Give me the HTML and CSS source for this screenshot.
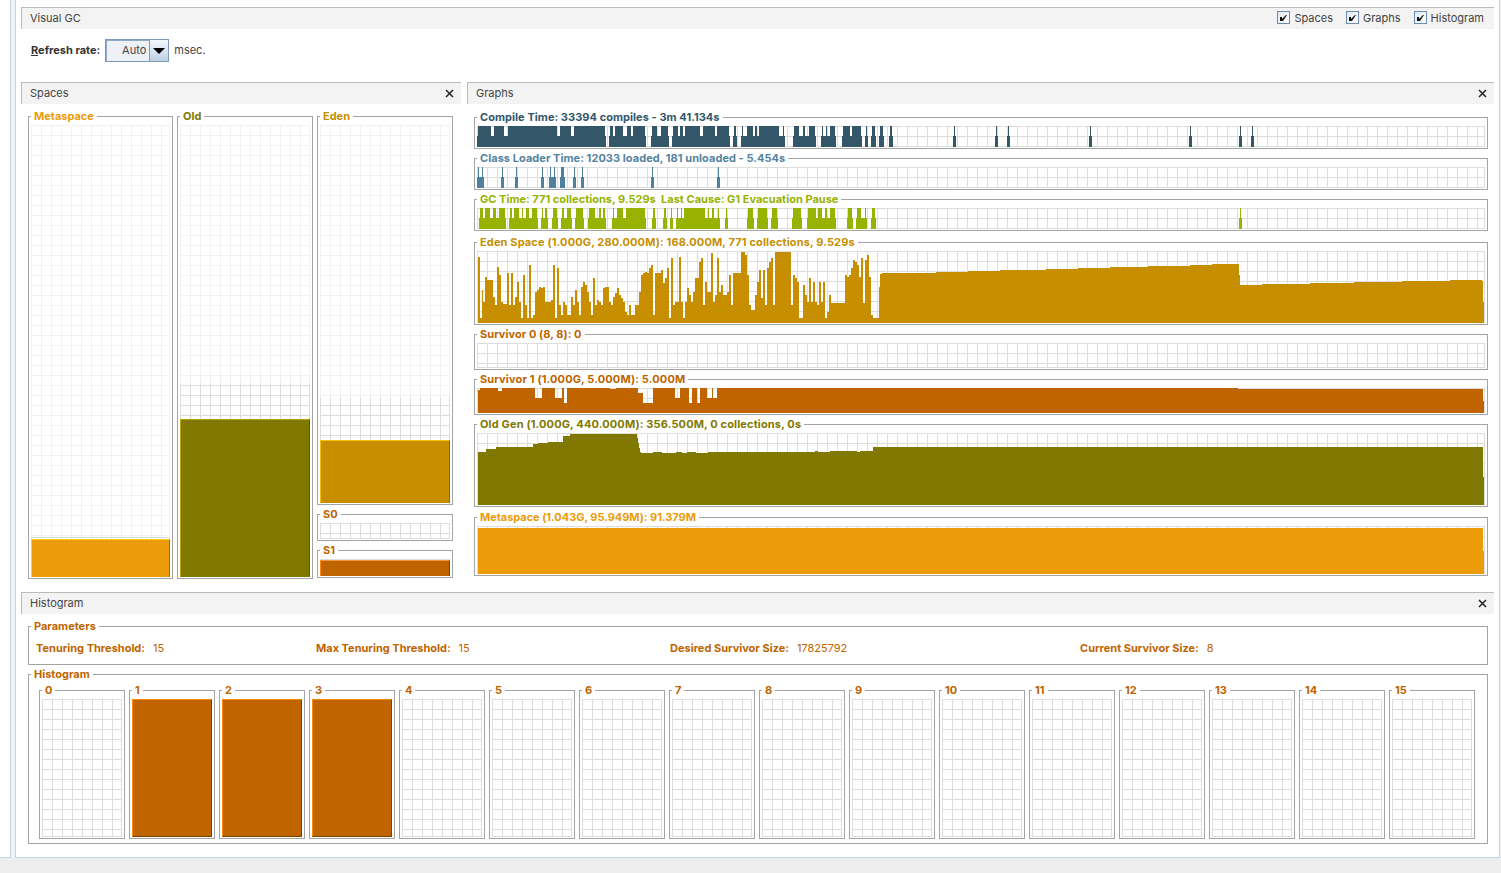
FILE: index.html
```html
<!DOCTYPE html>
<html lang="en">
<head>
<meta charset="utf-8">
<title>Visual GC</title>
<link rel="stylesheet" href="styles.css">
</head>
<body>
<div class="window">
  <div class="side"></div>
  <div class="gutter"></div>
  <main class="main">
    <header class="panel-head">
      <span>Visual GC</span>
      <div class="checks">
        <label class="check"><svg class="checkbox" viewBox="0 0 11 11"><path d="M2 5h2v2l4-4h1L5 9H2z"/></svg>Spaces</label>
        <label class="check"><svg class="checkbox" viewBox="0 0 11 11"><path d="M2 5h2v2l4-4h1L5 9H2z"/></svg>Graphs</label>
        <label class="check"><svg class="checkbox" viewBox="0 0 11 11"><path d="M2 5h2v2l4-4h1L5 9H2z"/></svg>Histogram</label>
      </div>
    </header>
    <div class="refresh">
      <span class="refresh-label"><u>R</u>efresh rate:</span>
      <div class="combo">
        <span class="combo-field">Auto</span>
        <span class="combo-btn"><svg width="12" height="6" viewBox="0 0 12 6"><path d="M0 0h12L6 6z"/></svg></span>
      </div>
      <span>msec.</span>
    </div>

    <div class="panels">
      <section class="panel panel-spaces">
        <header class="panel-head"><span>Spaces</span><svg class="close" viewBox="0 0 9 9"><path d="M1 1l7 7M8 1L1 8"/></svg></header>
        <div class="spaces-body">
          <div class="box space-meta">
            <div class="title c-meta">Metaspace</div>
            <div class="plot grid-light plot-tall">
              <div class="spacer"></div>
              <div class="dark dark-meta"></div>
              <div class="bar bar-meta"></div>
            </div>
          </div>
          <div class="box space-old">
            <div class="title c-old">Old</div>
            <div class="plot grid-light plot-tall">
              <div class="spacer"></div>
              <div class="dark dark-old"></div>
              <div class="bar bar-old"></div>
            </div>
          </div>
          <div class="eden-col">
            <div class="box">
              <div class="title c-eden">Eden</div>
              <div class="plot grid-light plot-eden">
                <div class="spacer"></div>
                <div class="dark dark-eden"></div>
                <div class="bar bar-eden"></div>
              </div>
            </div>
            <div class="box">
              <div class="title c-surv">S0</div>
              <div class="plot grid-dark plot-s0"></div>
            </div>
            <div class="box">
              <div class="title c-surv">S1</div>
              <div class="plot grid-dark plot-s1"><div class="spacer"></div><div class="bar bar-s1"></div></div>
            </div>
          </div>
        </div>
      </section>

      <section class="panel panel-graphs">
        <header class="panel-head"><span>Graphs</span><svg class="close" viewBox="0 0 9 9"><path d="M1 1l7 7M8 1L1 8"/></svg></header>
        <div class="graphs-body">
          <div class="box"><div class="title c-compile ls-slight">Compile Time: 33394 compiles - 3m 41.134s</div><div class="plot grid-dark"><svg class="chart h21" id="chart-compile"></svg></div></div>
          <div class="box"><div class="title c-class ls-slight">Class Loader Time: 12033 loaded, 181 unloaded - 5.454s</div><div class="plot grid-dark"><svg class="chart h21" id="chart-class"></svg></div></div>
          <div class="box"><div class="title c-gc ls-tiny">GC Time: 771 collections, 9.529s&nbsp; Last Cause: G1 Evacuation Pause</div><div class="plot grid-dark"><svg class="chart h21" id="chart-gc"></svg></div></div>
          <div class="box wide-gap"><div class="title c-eden ls-wide">Eden Space (1.000G, 280.000M): 168.000M, 771 collections, 9.529s</div><div class="plot grid-dark"><svg class="chart h72" id="chart-eden"></svg></div></div>
          <div class="box"><div class="title c-surv ls-slight">Survivor 0 (8, 8): 0</div><div class="plot grid-dark"><svg class="chart h25" id="chart-s0"></svg></div></div>
          <div class="box"><div class="title c-surv ls-wide">Survivor 1 (1.000G, 5.000M): 5.000M</div><div class="plot grid-dark"><svg class="chart h25" id="chart-s1"></svg></div></div>
          <div class="box"><div class="title c-old ls-wide">Old Gen (1.000G, 440.000M): 356.500M, 0 collections, 0s</div><div class="plot grid-dark"><svg class="chart h72" id="chart-old"></svg></div></div>
          <div class="box mid-gap"><div class="title c-meta ls-neg">Metaspace (1.043G, 95.949M): 91.379M</div><div class="plot grid-dark"><svg class="chart h48" id="chart-meta"></svg></div></div>
        </div>
      </section>
    </div>

    <section class="panel panel-hist">
      <header class="panel-head"><span>Histogram</span><svg class="close" viewBox="0 0 9 9"><path d="M1 1l7 7M8 1L1 8"/></svg></header>
      <div class="hist-body">
        <div class="box">
          <div class="title c-surv">Parameters</div>
          <div class="params">
            <div><b>Tenuring Threshold:</b><span>15</span></div>
            <div><b>Max Tenuring Threshold:</b><span>15</span></div>
            <div><b>Desired Survivor Size:</b><span>17825792</span></div>
            <div><b>Current Survivor Size:</b><span>8</span></div>
          </div>
        </div>
        <div class="box hist-box">
          <div class="title c-surv">Histogram</div>
          <div class="cells">
            <div class="box"><div class="title c-surv">0</div><div class="plot grid-dark cell-plot"></div></div>
            <div class="box"><div class="title c-surv">1</div><div class="plot grid-dark cell-plot"><div class="bar bar-full"></div></div></div>
            <div class="box"><div class="title c-surv">2</div><div class="plot grid-dark cell-plot"><div class="bar bar-full"></div></div></div>
            <div class="box"><div class="title c-surv">3</div><div class="plot grid-dark cell-plot"><div class="bar bar-full"></div></div></div>
            <div class="box"><div class="title c-surv">4</div><div class="plot grid-dark cell-plot"></div></div>
            <div class="box"><div class="title c-surv">5</div><div class="plot grid-dark cell-plot"></div></div>
            <div class="box"><div class="title c-surv">6</div><div class="plot grid-dark cell-plot"></div></div>
            <div class="box"><div class="title c-surv">7</div><div class="plot grid-dark cell-plot"></div></div>
            <div class="box"><div class="title c-surv">8</div><div class="plot grid-dark cell-plot"></div></div>
            <div class="box"><div class="title c-surv">9</div><div class="plot grid-dark cell-plot"></div></div>
            <div class="box"><div class="title c-surv">10</div><div class="plot grid-dark cell-plot"></div></div>
            <div class="box"><div class="title c-surv">11</div><div class="plot grid-dark cell-plot"></div></div>
            <div class="box"><div class="title c-surv">12</div><div class="plot grid-dark cell-plot"></div></div>
            <div class="box"><div class="title c-surv">13</div><div class="plot grid-dark cell-plot"></div></div>
            <div class="box"><div class="title c-surv">14</div><div class="plot grid-dark cell-plot"></div></div>
            <div class="box"><div class="title c-surv">15</div><div class="plot grid-dark cell-plot"></div></div>
          </div>
        </div>
      </div>
    </section>
  </main>
</div>
<script src="charts.js"></script>
</body>
</html>
```
FILE: styles.css
```css
* { box-sizing: border-box; }
html, body { margin: 0; height: 100%; }
body {
  background: #eee;
  color: #444;
  font: 11px/14px Inter, "Liberation Sans", sans-serif;
  overflow: hidden;
}
.window { display: flex; height: 858px; }
.side { width: 11px; background: #fff; border-right: 1px solid #c6d6e8; border-bottom: 1px solid #c6d6e8; }
.gutter { width: 4px; background: #f2f3f5; }
.main {
  width: 1485px;
  background: #fff;
  border: solid #c6d6e8;
  border-width: 0 1px 1px 1px;
  padding: 7px 5px 0;
}
.panel-head {
  display: flex;
  align-items: center;
  justify-content: space-between;
  height: 22px;
  padding: 0 7px 2px 8px;
  background: #f3f3f3;
  border-top: 1px solid #bbb;
  border-left: 1px solid #bbb;
}
.close { width: 9px; height: 9px; fill: none; stroke: #222; stroke-width: 1.5; margin-top: 2px; }
.checks { display: flex; gap: 13px; margin-right: 3px; }
.check { display: flex; align-items: center; gap: 4px; }
.checkbox {
  width: 13px;
  height: 13px;
  border: 1px solid #6c8cae;
  background: linear-gradient(135deg, #dfe8f2, #ffffff);
}
.checkbox path { fill: #111; }
.refresh { display: flex; align-items: flex-start; gap: 5px; height: 53px; padding: 10px 0 0 10px; line-height: 23px; }
.refresh-label { font-weight: 700; color: #333; }
.combo { display: flex; width: 64px; height: 23px; }
.combo-field {
  flex: 1;
  text-align: right;
  padding-right: 3px;
  line-height: 21px;
  background: #eef1f5;
  border: 1px solid #7f9ab8;
  border-right: 0;
  box-shadow: inset 1px 1px 0 #8fa8c4;
}
.combo-btn {
  display: flex;
  align-items: center;
  justify-content: center;
  width: 20px;
  border: 1px solid #7f9ab8;
  background: linear-gradient(#f6f9fc, #bcd0e6);
}
.panels { display: flex; gap: 6px; height: 510px; }
.panel-spaces { width: 440px; }
.panel-graphs { flex: 1; }
.box {
  border: 1px solid #a4a4a4;
  padding: 0 2px 1px;
  background: #fff;
}
.title {
  width: fit-content;
  height: 16px;
  margin-top: -8px;
  padding: 0 3px;
  line-height: 14px;
  font-weight: 700;
  background: #fff;
  white-space: nowrap;
}
.ls-wide { letter-spacing: .14px; }
.ls-slight { letter-spacing: .05px; }
.ls-tiny { letter-spacing: .02px; }
.ls-neg { letter-spacing: -.03px; }
.c-compile { color: #335669; }
.c-class { color: #55839f; }
.c-gc { color: #97b200; }
.c-eden { color: #c78f00; }
.c-surv { color: #c06400; }
.c-old { color: #807800; }
.c-meta { color: #ec9c0a; }

.plot { display: flex; flex-direction: column; box-shadow: inset -1px -1px 0 #ddd; }
.grid-dark {
  background-image: linear-gradient(#ddd 1px, transparent 1px), linear-gradient(90deg, #ddd 1px, transparent 1px);
  background-size: 10px 10px;
}
.grid-light {
  background-image: linear-gradient(#f2f2f2 1px, transparent 1px), linear-gradient(90deg, #f2f2f2 1px, transparent 1px);
  background-size: 10px 10px;
  box-shadow: inset -1px 0 0 #f2f2f2;
}
.spacer { flex: 1; }
.dark {
  background-image: linear-gradient(#ddd 1px, transparent 1px), linear-gradient(90deg, #ddd 1px, transparent 1px);
  background-size: 10px 10px;
  border-right: 1px solid #ddd;
}
.bar { border: solid; border-width: 1px 1px 0 1px; flex: none; }
.dark-meta { height: 2px; }
.dark-old { height: 36px; background-position: 0 2px; }
.dark-eden { height: 43px; background-position: 0 8px; }
.bar-meta { height: 38px; background: #ec9c0a; border-color: #ffd21a #a86f08 #a86f08 #ffd21a; }
.bar-old { height: 158px; background: #807800; border-color: #b3a900 #5f5900 #5f5900 #b3a900; }
.bar-eden { height: 63px; background: #c78f00; border-color: #f5c000 #8a6a00 #8a6a00 #f5c000; }
.bar-s1 { height: 16px; background: #c06400; border-color: #ef9a40 #7a4000 #7a4000 #ff8a00; }
.bar-full {
  flex: 1;
  background: #c06400;
  border-width: 1px;
  border-color: #ff8a00 #7a4000 #7a4000 #ff8a00;
}
.spaces-body { display: flex; gap: 4px; padding: 12px 0 0 7px; }
.space-meta { width: 145px; }
.space-old { width: 136px; }
.eden-col { display: flex; flex-direction: column; gap: 9px; width: 136px; }
.plot-tall { height: 452px; }
.plot-eden { height: 378px; }
.plot-s0 { height: 16px; }
.plot-s1 { height: 17px; }

.graphs-body { display: flex; flex-direction: column; gap: 9px; padding: 13px 6px 0 7px; }
.wide-gap { margin-top: 2px; }
.mid-gap { margin-top: 1px; }
.chart { display: block; width: 100%; }
.h21 { height: 21px; }
.h25 { height: 25px; }
.h48 { height: 48px; }
.h72 { height: 72px; }

.hist-body { display: flex; flex-direction: column; gap: 9px; padding: 12px 6px 0 7px; }
.params {
  display: grid;
  grid-template-columns: 280px 354px 410px auto;
  padding: 6px 0 8px 5px;
  color: #c06400;
}
.params b { margin-right: 8px; }
.hist-box { padding: 0 2px 4px; }
.cells {
  display: grid;
  grid-template-columns: repeat(16, 86px);
  gap: 4px;
  margin: 7px 0 0 8px;
}
.cell-plot { height: 138px; }
```
FILE: charts.js
```js
// Chart traces, in page coordinates of the plot (x from 477).
var ORIGIN_X = 477;
var COLORS = {
  compile: '#335669', cls: '#4f80a0', gc: '#97b200', eden: '#c78f00',
  s1: '#c06400', old: '#807800', meta: '#ec9c0a'
};

function zx(v) { return 470 + v / 3; }

function draw(id, color, height, paths) {
  var svg = document.getElementById(id);
  svg.setAttribute('viewBox', '0 0 1008 ' + height);
  svg.setAttribute('shape-rendering', 'crispEdges');
  var p = document.createElementNS('http://www.w3.org/2000/svg', 'path');
  p.setAttribute('d', paths);
  p.setAttribute('fill', color);
  svg.appendChild(p);
}

// Activity bars: full height over the range, half height a little wider,
// with the lower half joined across narrow gaps.
function activity(ranges, height, half) {
  var d = '';
  var rounded = ranges.map(function (r) {
    return [Math.round(r[0] - ORIGIN_X), Math.round(r[1] - ORIGIN_X)];
  }).sort(function (a, b) { return a[0] - b[0]; });
  rounded.forEach(function (r, i) {
    var a = r[0], b = r[1];
    d += 'M' + a + ' 0H' + b + 'V' + height + 'H' + a + 'Z';
    var next = rounded[i + 1];
    var end = next && next[0] - b <= 4 ? next[0] : b + 1;
    d += 'M' + (a - 1) + ' ' + half + 'H' + end + 'V' + height + 'H' + (a - 1) + 'Z';
  });
  return d;
}

// Step area: steps are [endX, topY] in page coordinates.
function area(startX, steps, top, height) {
  var x0 = Math.round(startX - ORIGIN_X);
  var d = 'M' + x0 + ' ' + height;
  var prev = x0;
  steps.forEach(function (s) {
    var x = Math.round(s[0] - ORIGIN_X);
    if (x <= prev) { return; }
    d += 'V' + Math.max(0, Math.round(s[1] - top)) + 'H' + x;
    prev = x;
  });
  return d + 'V' + height + 'Z';
}

function zoomRanges(list) {
  return list.map(function (r) { return [zx(r[0]), zx(r[1])]; });
}

var compile = zoomRanges([[24,63],[71,103],[113,262],[270,302],[311,406],[420,430],[435,460],[472,484],[490,525],[546,560],[573,595],[610,625],[630,640],[645,690],[700,735],[742,778],[792,797],[815,820],[830,848],[855,862],[868,928],[938,942],[972,987],[1000,1005],[1018,1035],[1055,1060],[1067,1072],[1080,1095],[1120,1140],[1147,1172],[1187,1192],[1205,1215],[1230,1240],[1260,1265]])
  .concat([[954,955],[996,997],[1008,1009],[1090,1091],[1190,1191],[1240,1241],[1252,1253]]);
draw('chart-compile', COLORS.compile, 21, activity(compile, 21, 10));

var loader = [[478,479],[482,483],[502,503],[516,517],[542,543],[550,551],[554,555],[561,564],[574,575],[582,583],[652,653],[718,719]];
draw('chart-class', COLORS.cls, 21, activity(loader, 21, 10));

var gc = zoomRanges([[30,38],[45,60],[70,78],[88,105],[120,127],[133,147],[155,160],[168,176],[186,200],[215,218],[225,232],[250,262],[276,282],[292,303],[318,340],[358,376],[388,392],[400,405],[428,432],[440,458],[468,525],[550,555],[583,587],[603,606],[620,623],[632,635],[642,705],[714,718],[727,733],[743,746],[768,772],[835,848],[865,890],[905,920],[968,992],[1015,1038],[1045,1055],[1065,1070],[1080,1095],[1135,1147],[1160,1172],[1184,1187],[1207,1214]])
  .concat([[1240,1241]]);
draw('chart-gc', COLORS.gc, 21, activity(gc, 21, 10));

// Eden: [zoomX, zoomY] samples of the saw-tooth part.
var edenTrace = [[24,445],[30,455],[36,640],[40,555],[46,590],[52,515],[60,525],[68,525],[74,575],[80,600],[86,485],[92,510],[98,590],[104,598],[110,598],[116,505],[122,600],[128,505],[134,600],[140,575],[146,530],[152,590],[158,640],[164,510],[170,600],[176,640],[182,480],[188,640],[194,630],[200,560],[206,555],[212,545],[218,550],[224,545],[230,590],[236,590],[242,590],[248,585],[254,480],[260,640],[266,490],[272,600],[278,630],[284,590],[290,600],[296,630],[302,630],[308,575],[314,600],[320,555],[326,590],[332,630],[338,545],[344,530],[350,540],[356,560],[362,590],[368,630],[374,520],[380,600],[386,585],[392,590],[398,600],[404,550],[410,545],[416,545],[422,590],[428,600],[434,575],[440,565],[446,550],[452,570],[458,580],[464,590],[470,620],[476,630],[482,600],[488,630],[494,630],[500,600],[506,600],[512,560],[518,510],[524,505],[530,500],[536,505],[542,490],[548,480],[554,630],[560,505],[566,505],[572,505],[578,495],[584,535],[590,520],[596,490],[602,640],[608,460],[614,600],[620,590],[626,590],[632,455],[638,590],[644,640],[650,590],[656,550],[662,570],[668,590],[674,560],[680,520],[686,520],[692,470],[698,460],[704,600],[710,530],[716,560],[722,560],[728,445],[734,590],[740,570],[746,460],[752,560],[758,540],[764,570],[770,570],[776,560],[782,510],[788,600],[794,505],[800,505],[806,505],[812,505],[818,440],[824,440],[830,450],[836,510],[842,600],[848,615],[854,615],[860,570],[866,530],[872,495],[878,580],[884,495],[890,600],[896,490],[902,470],[908,460],[914,600],[920,440],[962,440],[968,600],[974,510],[980,520],[986,530],[992,640],[998,640],[1004,540],[1010,570],[1016,590],[1022,520],[1028,590],[1034,530],[1040,590],[1046,600],[1052,530],[1058,590],[1064,530],[1070,640],[1076,620],[1082,570],[1090,595],[1125,595],[1130,510],[1136,515],[1142,510],[1148,490],[1154,465],[1160,470],[1166,480],[1172,515],[1178,460],[1184,595],[1190,465],[1196,450],[1202,515],[1208,630],[1212,640],[1226,640],[1230,545],[1236,508]];
var edenSteps = edenTrace.map(function (s) { return [zx(s[0]), 105 + s[1] / 3]; });
edenSteps = edenSteps.concat([[936,273],[968,272],[1000,271],[1046,270],[1078,269],[1110,268],[1148,267],[1190,266],[1212,265],[1239,264],[1240,275],[1262,285],[1310,284],[1354,283],[1402,282],[1450,281],[1482,280],[1483,281],[1484,302]]);
draw('chart-eden', COLORS.eden, 72, area(478, edenSteps, 251, 72));

var survivor = [[30,195],[85,189],[97,198],[195,189],[215,218],[255,189],[275,218],[282,189],[292,233],[420,189],[438,191],[505,189],[520,205],[550,233],[615,189],[630,218],[658,189],[665,233],[682,189],[690,233],[712,189],[725,218],[730,189],[742,218]]
  .map(function (s) { return [zx(s[0]), 325 + s[1] / 3]; })
  .concat([[1238,388],[1483,389],[1484,401]]);
draw('chart-s1', COLORS.s1, 25, area(478, survivor, 388, 25));

var oldSteps = [[48,381],[78,372],[190,366],[205,358],[235,354],[280,351],[300,333],[500,327],[503,340],[506,355],[509,370],[512,381],[550,384],[575,381],[618,384],[636,381],[650,384],[678,381],[714,384],[1035,381],[1045,378],[1080,381],[1160,378],[1170,381],[1210,378]]
  .map(function (s) { return [zx(s[0]), 325 + s[1] / 3]; })
  .concat([[1483,447],[1484,477]]);
draw('chart-old', COLORS.old, 72, area(478, oldSteps, 433, 72));

draw('chart-meta', COLORS.meta, 48, area(478, [[1483,528],[1484,551]], 526, 48));
```
